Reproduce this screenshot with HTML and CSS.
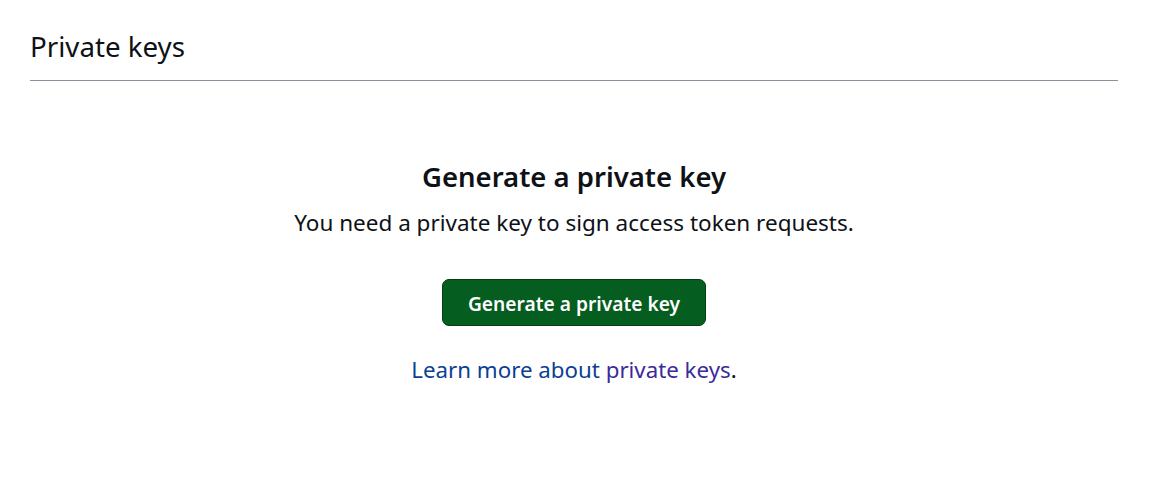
FILE: index.html
```html
<!DOCTYPE html>
<html>
    <head>
        <meta charset="utf-8">
        <link rel="stylesheet" href="styles.css">
    </head>
    <body>
        <div class="page">
            <div class="subhead">
                <h2 class="subhead-heading">Private keys</h2>
            </div>

            <div class="blankslate">
                <h3 class="blankslate-heading">Generate a private key</h3>
                <p class="blankslate-text">You need a private key to sign access token requests.</p>
                <button class="btn-primary">Generate a private key</button>
                <p class="blankslate-link">
                    <a href="#" class="link">Learn more about</a> <a href="#" class="link visited">private keys</a>.
                </p>
            </div>
        </div>
    </body>
</html>
```

FILE: styles.css
```css
body {
    margin: 0;
    background: #ffffff;
    color: #0e1116;
    font-family: "Noto Sans", "Open Sans", sans-serif;
}

.page {
    padding: 0 34px 0 30px;
}

.subhead {
    padding-top: 24px;
    padding-bottom: 11px;
    border-bottom: 1px solid #88929d;
}

.subhead-heading {
    margin: 0;
    font-size: 27.7px;
    font-weight: 400;
    line-height: 45px;
}

.blankslate {
    display: flex;
    flex-direction: column;
    align-items: center;
    padding-top: 77px;
    text-align: center;
}

.blankslate-heading {
    margin: 0;
    font-size: 27.5px;
    font-weight: 600;
    line-height: 37.5px;
}

.blankslate-text {
    margin: 12px 0 0 0;
    font-size: 22.5px;
    line-height: 30px;
}

.btn-primary {
    margin-top: 41px;
    height: 47px;
    padding: 3px 25px 0 25px;
    border: 1px solid #033d14;
    border-radius: 7px;
    background: #055d20;
    color: #ffffff;
    font-family: inherit;
    font-size: 19.2px;
    font-weight: 600;
}

.blankslate-link {
    margin: 29px 0 0 0;
    font-size: 22.3px;
    line-height: 30px;
}

.link {
    color: #0b3f94;
    text-decoration: none;
}

.link.visited {
    color: #3a2b9a;
}
```
